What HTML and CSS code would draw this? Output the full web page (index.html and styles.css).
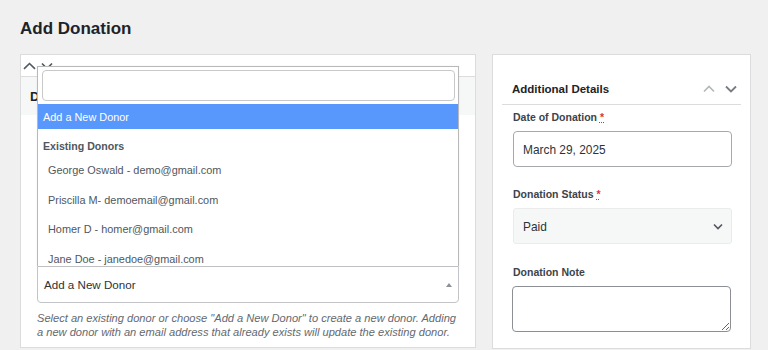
FILE: index.html
```html
<!DOCTYPE html>
<html lang="en">
<head>
<meta charset="utf-8">
<title>Add Donation</title>
<link rel="stylesheet" href="styles.css">
</head>
<body>
<div class="wrap">
  <h1 class="page-title">Add Donation</h1>
  <div class="columns">
    <div class="panel panel-main">
      <div class="panel-handle">
        <svg class="chev chev-dark" width="13" height="8" viewBox="0 0 13 8"><path d="M1 6.8 6.5 1.5l5.5 5.3" fill="none" stroke="currentColor" stroke-width="1.6"/></svg>
        <svg class="chev chev-dark" width="12" height="8" viewBox="0 0 12 8"><path d="M1 1.5 6 6.5l5-5" fill="none" stroke="currentColor" stroke-width="1.6"/></svg>
      </div>
      <div class="box-header"><h2 class="box-title">Donor Details</h2></div>
      <div class="box-body">
        <div class="donor-field">
          <div class="dropdown">
            <div class="dropdown-search"><input class="search-input" type="text" aria-label="Search donors"></div>
            <ul class="results">
              <li class="option option-highlight">Add a New Donor</li>
              <li class="group-label">Existing Donors</li>
              <li class="option option-child">George Oswald - demo@gmail.com</li>
              <li class="option option-child">Priscilla M- demoemail@gmail.com</li>
              <li class="option option-child">Homer D - homer@gmail.com</li>
              <li class="option option-child option-last">Jane Doe - janedoe@gmail.com</li>
            </ul>
          </div>
          <div class="select-box">
            <span class="select-value">Add a New Donor</span>
            <span class="caret-up"></span>
          </div>
        </div>
        <p class="desc">Select an existing donor or choose "Add a New Donor" to create a new donor. Adding a new donor with an email address that already exists will update the existing donor.</p>
      </div>
    </div>

    <div class="panel panel-side">
      <div class="side-header">
        <h2 class="side-title">Additional Details</h2>
        <div class="side-arrows">
          <svg class="chev chev-light" width="12" height="8" viewBox="0 0 12 8"><path d="M1 6.5 6 1.5l5 5" fill="none" stroke="currentColor" stroke-width="1.6"/></svg>
          <svg class="chev chev-mid" width="12" height="8" viewBox="0 0 12 8"><path d="M1 1.5 6 6.5l5-5" fill="none" stroke="currentColor" stroke-width="1.8"/></svg>
        </div>
      </div>
      <div class="side-body">
        <div class="field">
          <label class="field-label">Date of Donation <abbr class="req" title="required">*</abbr></label>
          <div class="text-input">March 29, 2025</div>
        </div>
        <div class="field field-status">
          <label class="field-label">Donation Status <abbr class="req" title="required">*</abbr></label>
          <div class="select-input">
            <span>Paid</span>
            <svg class="chev chev-select" width="10" height="7" viewBox="0 0 10 7"><path d="M1 1.5 5 5.5l4-4" fill="none" stroke="currentColor" stroke-width="1.6"/></svg>
          </div>
        </div>
        <div class="field">
          <label class="field-label">Donation Note</label>
          <textarea class="note-input" aria-label="Donation Note"></textarea>
        </div>
      </div>
    </div>
  </div>
</div>
</body>
</html>
```

FILE: styles.css
```css
* { box-sizing: border-box; }

html, body {
  margin: 0;
  padding: 0;
  background: #f0f0f1;
  font-family: "Liberation Sans", Arial, sans-serif;
  color: #3c434a;
}

.wrap {
  padding: 0 17px 0 20px;
  height: 350px;
  overflow: hidden;
}

.page-title {
  margin: 0;
  padding-top: 17px;
  font-size: 17px;
  line-height: 23px;
  font-weight: 700;
  color: #1d2327;
}

.columns {
  display: flex;
  gap: 16px;
  margin-top: 14px;
  align-items: flex-start;
}

.panel {
  background: #fff;
  border: 1px solid #dcdcde;
}

.panel-main { width: 456px; }
.panel-side { width: 259px; height: 295px; }

/* left panel */
.panel-handle {
  height: 22px;
  border-bottom: 1px solid #dcdcde;
  display: flex;
  align-items: center;
  gap: 5px;
  padding-left: 2px;
}

.chev { display: block; }
.chev-dark { color: #50575e; }
.chev-light { color: #b4b7ba; }
.chev-mid { color: #787c82; }
.chev-select { color: #50575e; }

.box-header {
  height: 38px;
  background: #f6f7f7;
  display: flex;
  align-items: center;
  padding-left: 9px;
}

.box-title {
  margin: 0;
  font-size: 13px;
  font-weight: 700;
  color: #1d2327;
}

.box-body {
  padding: 0 16px 8px 16px;
}

.donor-field {
  position: relative;
  margin-top: 151px;
}

.dropdown {
  position: absolute;
  left: 0;
  right: 0;
  bottom: 100%;
  background: #fff;
  border: 1px solid #b8b8b8;
  border-bottom: none;
  box-shadow: 0 0 2px rgba(0,0,0,0.06);
}

.dropdown-search {
  padding: 3px 3px 3px 4px;
}

.search-input {
  display: block;
  width: 100%;
  height: 31px;
  border: 1px solid #c8c8c8;
  border-radius: 4px;
  background: #fff;
  margin: 0;
  font: inherit;
  outline: none;
}

.results {
  list-style: none;
  margin: 0;
  padding: 0;
  height: 162px;
  overflow: hidden;
}

.option {
  font-size: 10.9px;
  color: #50575e;
}

.option-highlight {
  background: #5897fb;
  color: #fff;
  height: 25px;
  line-height: 26px;
  padding-left: 5px;
}

.group-label {
  font-size: 10.6px;
  font-weight: 700;
  color: #50575e;
  height: 27px;
  padding: 10px 0 0 5px;
  line-height: 14px;
}

.option-child {
  height: 29.5px;
  line-height: 29.5px;
  padding-left: 10px;
}

.option-last {
  height: 21px;
  line-height: 29.5px;
  overflow: hidden;
}

.select-box {
  height: 37px;
  border: 1px solid #c3c4c7;
  border-radius: 0 0 4px 4px;
  display: flex;
  align-items: center;
  justify-content: space-between;
  padding: 0 6px 0 6px;
  background: #fff;
}

.select-value {
  font-size: 11.6px;
  color: #2c3338;
}

.caret-up {
  width: 0;
  height: 0;
  border-left: 3px solid transparent;
  border-right: 3px solid transparent;
  border-bottom: 4px solid #8c8f94;
}

.desc {
  margin: 8px 0 0 0;
  font-size: 11.1px;
  line-height: 14px;
  font-style: italic;
  color: #646970;
}

/* right panel */
.side-header {
  margin: 0 9px;
  border-bottom: 1px solid #dcdcde;
  display: flex;
  align-items: center;
  justify-content: space-between;
  padding: 25px 4px 6px 10px;
}

.side-title {
  margin: 0;
  font-size: 11.5px;
  line-height: 18px;
  font-weight: 700;
  color: #1d2327;
}

.side-arrows {
  display: flex;
  gap: 10px;
  align-items: center;
}

.side-body {
  padding: 5px 18px 0 20px;
}

.field { margin-bottom: 20px; }
.field-status { margin-bottom: 21px; }

.field-label {
  display: block;
  font-size: 10.5px;
  line-height: 14px;
  font-weight: 700;
  color: #3c434a;
  margin-bottom: 7px;
}

.req {
  color: #d63638;
  text-decoration: underline dotted;
  border: none;
}

.text-input {
  height: 36px;
  border: 1px solid #a7aaad;
  border-radius: 4px;
  display: flex;
  align-items: center;
  padding-left: 9px;
  padding-top: 1px;
  font-size: 11.9px;
  color: #2c3338;
}

.select-input {
  height: 36px;
  background: #f6f7f7;
  border: 1px solid #ebebeb;
  border-radius: 3px;
  display: flex;
  align-items: center;
  justify-content: space-between;
  padding: 1px 8px 0 9px;
  font-size: 11.9px;
  color: #2c3338;
}

.note-input {
  display: block;
  width: 100%;
  height: 46px;
  border: 1px solid #8c8f94;
  border-radius: 4px;
  margin: 0 0 0 -1px;
  font: inherit;
  resize: vertical;
}
```
